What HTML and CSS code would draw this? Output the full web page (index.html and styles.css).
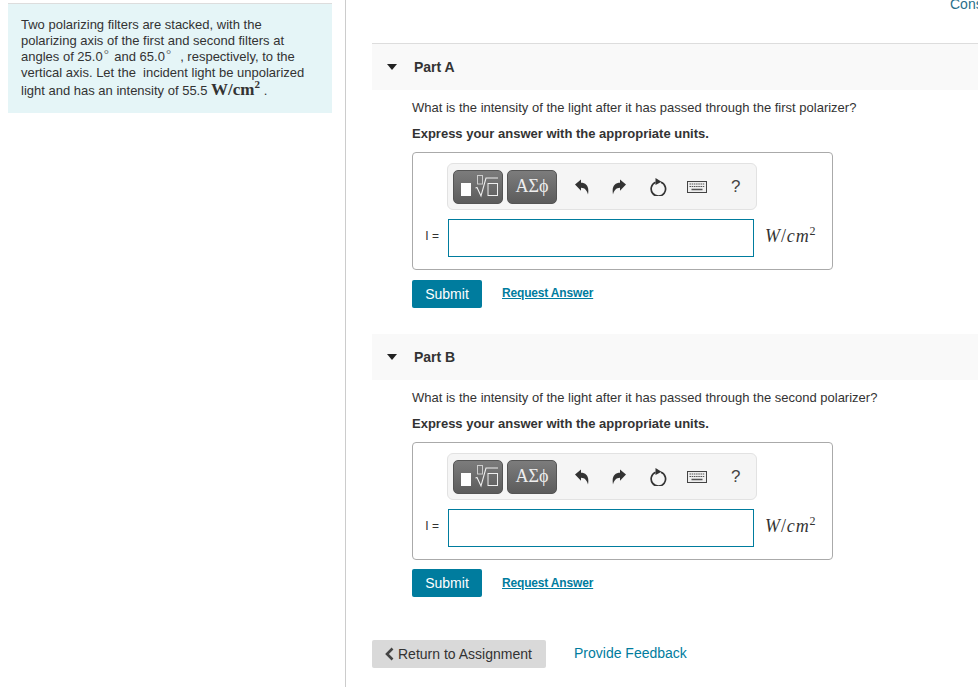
FILE: index.html
```html
<!DOCTYPE html>
<html lang="en">
<head>
<meta charset="utf-8">
<title>Part A and B</title>
<link rel="stylesheet" href="styles.css">
</head>
<body>
<div class="page">
  <aside class="side">
    <div class="info">Two polarizing filters are stacked, with the polarizing axis of the first and second filters at angles of 25.0<sup class="deg">&deg;</sup> and 65.0<sup class="deg">&deg;</sup> &nbsp;, respectively, to the vertical axis. Let the &nbsp;incident light be unpolarized light and has an intensity of 55.5 <span class="unit-b">W/cm<sup>2</sup></span> .</div>
  </aside>
  <main class="main">
    <div class="topbar"><a class="cons">Constants</a></div>

    <section class="part first">
      <h2 class="part-head"><span class="caret"></span>Part A</h2>
      <div class="part-body">
        <p class="q">What is the intensity of the light after it has passed through the first polarizer?</p>
        <p class="ex">Express your answer with the appropriate units.</p>
        <div class="box">
          <div class="toolbar">
            <div class="tb-btn">
              <svg width="50" height="34" viewBox="0 0 50 34"><rect x="8" y="13" width="10" height="13" fill="#fff"/><path d="M22.500 18l1.500-.5 4 8.500 5-18h12" fill="none" stroke="#eee" stroke-width="1.100"/><rect x="24.500" y="5.500" width="5" height="8.500" fill="none" stroke="#ccc"/><rect x="35" y="13.500" width="9.500" height="12" fill="none" stroke="#eee"/></svg>
            </div>
            <div class="tb-btn tb-sym">&Alpha;&Sigma;&#981;</div>
            <div class="tools">
              <svg class="ic undo" width="14" height="16" viewBox="0 0 14 16"><path d="M0 5.500L6 .5v3.200C11 3.700 14.500 7 13 15.500 12 11.500 10 8.700 6 8.700v3z" fill="#333"/></svg>
              <svg class="ic redo" width="14" height="16" viewBox="0 0 14 16"><path d="M14 5.500L8 .5v3.200C3 3.700-.5 7 1 15.500 2 11.500 4 8.700 8 8.700v3z" fill="#333"/></svg>
              <svg class="ic reset" width="17" height="18" viewBox="0 0 17 18"><path d="M5.500 4.300a7.200 7.200 0 1 0 5.500-.1" fill="none" stroke="#333" stroke-width="1.700"/><path d="M5.500 0l6 3.800-6 3.200z" fill="#333"/></svg>
              <svg class="ic keys" width="20" height="12" viewBox="0 0 20 12"><rect x=".5" y=".5" width="19" height="11" fill="#eee" stroke="#444"/><path d="M2.500 3h15M2.500 5.500h15" stroke="#555" stroke-width="1.200" stroke-dasharray="1.500 .7"/><path d="M4.500 8.500h11" stroke="#555" stroke-width="1.500"/></svg>
              <span class="help">?</span>
            </div>
          </div>
          <div class="ans-row">
            <label class="var">I =</label>
            <div class="field"></div>
            <span class="unit-i"><i>W</i>/<i>cm</i><sup>2</sup></span>
          </div>
        </div>
        <div class="actions">
          <a class="submit">Submit</a>
          <a class="req">Request Answer</a>
        </div>
      </div>
    </section>

    <section class="part second">
      <h2 class="part-head"><span class="caret"></span>Part B</h2>
      <div class="part-body">
        <p class="q">What is the intensity of the light after it has passed through the second polarizer?</p>
        <p class="ex">Express your answer with the appropriate units.</p>
        <div class="box">
          <div class="toolbar">
            <div class="tb-btn">
              <svg width="50" height="34" viewBox="0 0 50 34"><rect x="8" y="13" width="10" height="13" fill="#fff"/><path d="M22.500 18l1.500-.5 4 8.500 5-18h12" fill="none" stroke="#eee" stroke-width="1.100"/><rect x="24.500" y="5.500" width="5" height="8.500" fill="none" stroke="#ccc"/><rect x="35" y="13.500" width="9.500" height="12" fill="none" stroke="#eee"/></svg>
            </div>
            <div class="tb-btn tb-sym">&Alpha;&Sigma;&#981;</div>
            <div class="tools">
              <svg class="ic undo" width="14" height="16" viewBox="0 0 14 16"><path d="M0 5.500L6 .5v3.200C11 3.700 14.500 7 13 15.500 12 11.500 10 8.700 6 8.700v3z" fill="#333"/></svg>
              <svg class="ic redo" width="14" height="16" viewBox="0 0 14 16"><path d="M14 5.500L8 .5v3.200C3 3.700-.5 7 1 15.500 2 11.500 4 8.700 8 8.700v3z" fill="#333"/></svg>
              <svg class="ic reset" width="17" height="18" viewBox="0 0 17 18"><path d="M5.500 4.300a7.200 7.200 0 1 0 5.500-.1" fill="none" stroke="#333" stroke-width="1.700"/><path d="M5.500 0l6 3.800-6 3.200z" fill="#333"/></svg>
              <svg class="ic keys" width="20" height="12" viewBox="0 0 20 12"><rect x=".5" y=".5" width="19" height="11" fill="#eee" stroke="#444"/><path d="M2.500 3h15M2.500 5.500h15" stroke="#555" stroke-width="1.200" stroke-dasharray="1.500 .7"/><path d="M4.500 8.500h11" stroke="#555" stroke-width="1.500"/></svg>
              <span class="help">?</span>
            </div>
          </div>
          <div class="ans-row">
            <label class="var">I =</label>
            <div class="field"></div>
            <span class="unit-i"><i>W</i>/<i>cm</i><sup>2</sup></span>
          </div>
        </div>
        <div class="actions">
          <a class="submit">Submit</a>
          <a class="req">Request Answer</a>
        </div>
      </div>
    </section>

    <footer class="foot">
      <a class="back"><svg width="9" height="14" viewBox="0 0 9 14"><path d="M7.500 1.500L2 7l5.500 5.500" fill="none" stroke="#444" stroke-width="2.600"/></svg>Return to Assignment</a>
      <a class="feedback">Provide Feedback</a>
    </footer>
  </main>
</div>
</body>
</html>
```

FILE: styles.css
```css
* { box-sizing: border-box; }
html, body { margin: 0; height: 100%; overflow: hidden; background: #fff; }
body { font-family: "Liberation Sans", Arial, sans-serif; font-size: 14px; color: #333; }
.page { display: flex; height: 687px; width: 978px; overflow: hidden; }
.side { width: 346px; flex: none; border-right: 1px solid #ccc; padding: 3px 13px 0 8px; }
.info { height: 110px; background: #e5f5f7; border-top: 1px solid #ddd; padding: 13px 14px 0 13px; font-size: 13px; line-height: 16px; color: #333; }
.deg { display: inline-block; width: 7px; margin-left: 1px; font-size: 13px; line-height: 0; vertical-align: 3px; font-family: "Liberation Serif", serif; color: #666; }
.unit-b { font-family: "Liberation Serif", serif; font-weight: bold; font-size: 17px; line-height: 18px; }
.unit-b sup { font-size: 11px; line-height: 0; }
.main { flex: 1; min-width: 0; padding-left: 26px; }
.topbar { height: 43px; padding-left: 578px; white-space: nowrap; overflow: hidden; }
.cons { display: block; color: #2a6f8a; font-size: 14px; line-height: 8px; }
.part-head { margin: 0; height: 47px; display: flex; align-items: center; background: #f9f9f9; font-size: 14px; font-weight: bold; color: #333; }
.first .part-head { border-top: 1px solid #ddd; }
.second { margin-top: 26px; }
.second .part-head { height: 46px; }
.caret { width: 0; height: 0; margin: 0 17px 0 15px; border: 5px solid transparent; border-top: 6px solid #222; border-bottom: 0; }
.part-body { padding-left: 40px; }
.q { margin: 0; padding-top: 10px; font-size: 13px; line-height: 16px; color: #333; }
.ex { margin: 10px 0 0; font-size: 13px; line-height: 16px; font-weight: bold; }
.box { width: 421px; height: 118px; margin-top: 10px; border: 1px solid #aaa; border-radius: 4px; padding: 10px 0 0 34px; }
.toolbar { width: 310px; height: 47px; display: flex; align-items: center; padding-left: 5px; gap: 4px; background: #f5f5f5; border: 1px solid #e2e2e2; border-radius: 6px; }
.tb-btn { flex: none; width: 50px; height: 34px; border-radius: 5px; border: 1px solid #555; background: linear-gradient(#7c7c7c, #5c5c5c); color: #eee; display: flex; align-items: center; justify-content: center; overflow: hidden; }
.tb-btn svg { flex: none; }
.tb-sym { font-family: "Liberation Serif", serif; font-size: 18px; }
.tools { display: flex; align-items: center; margin-left: 14px; }
.ic { flex: none; }
.undo { margin-right: 23px; }
.redo { margin-right: 24px; }
.reset { margin-right: 20px; }
.keys { margin-right: 24px; }
.help { font-size: 17px; color: #444; }
.ans-row { display: flex; align-items: center; margin-top: 9px; }
.var { width: 35px; margin-left: -34px; text-align: right; padding-right: 9px; padding-bottom: 4px; font-size: 12px; }
.field { width: 306px; height: 38px; border: 1px solid #007c9e; background: #fff; }
.unit-i { margin-left: 11px; padding-bottom: 3px; font-family: "Liberation Serif", serif; font-size: 18px; letter-spacing: .9px; color: #333; }
.unit-i sup { font-size: 12px; line-height: 0; }
.actions { display: flex; align-items: center; margin-top: 10px; }
.second .actions { margin-top: 9px; }
.submit { width: 70px; height: 28px; display: flex; align-items: center; justify-content: center; background: #007c9e; color: #fff; border-radius: 2px; font-size: 14px; }
.req { margin-left: 20px; margin-top: -2px; color: #007c9e; font-size: 12px; font-weight: bold; letter-spacing: -.17px; text-decoration: underline; }
.second .req { margin-top: 0; }
.foot { display: flex; align-items: center; margin-top: 43px; }
.back { width: 174px; height: 28px; display: flex; align-items: center; gap: 4px; padding-left: 13px; background: #d9d9d9; border-radius: 2px; color: #333; font-size: 14px; }
.feedback { margin-left: 28px; margin-top: -2px; color: #007c9e; font-size: 14px; }
```
